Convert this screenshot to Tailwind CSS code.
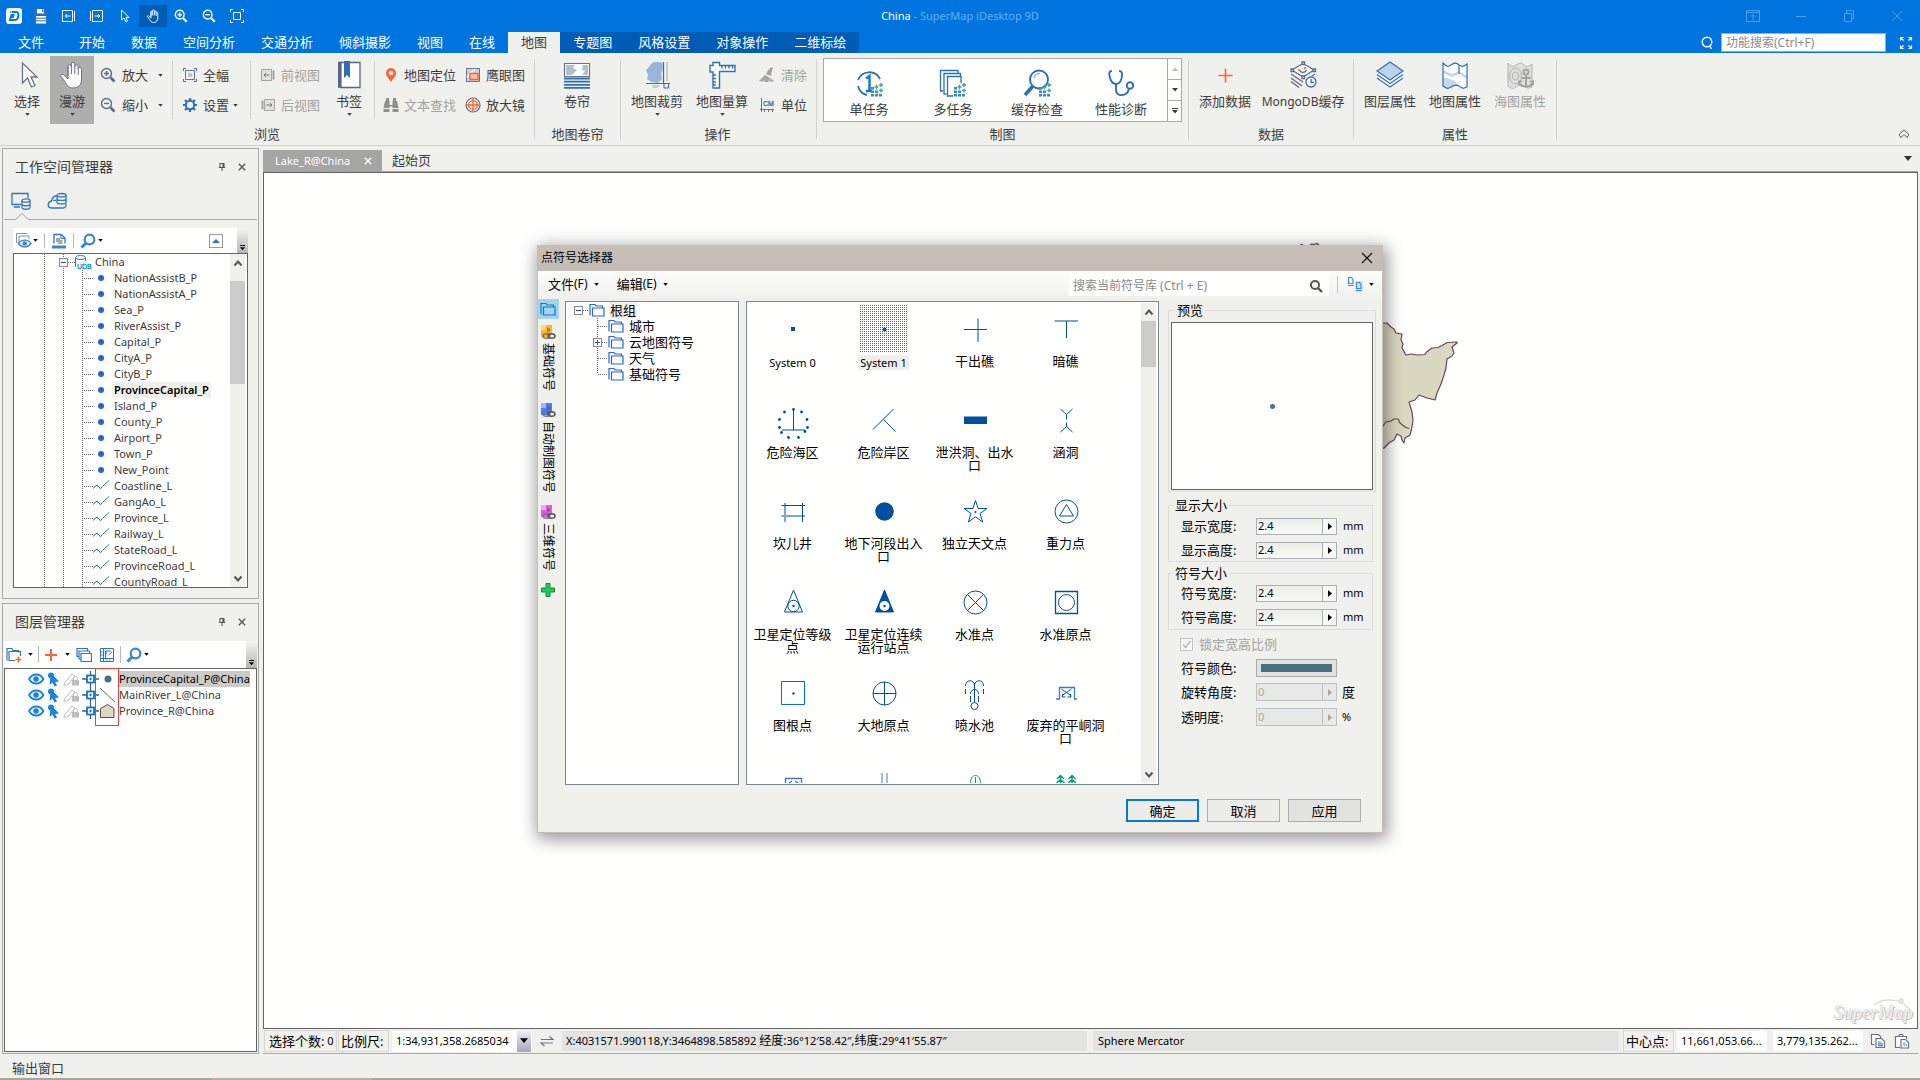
<!DOCTYPE html>
<html lang="zh-CN">
<head>
<meta charset="utf-8">
<title>China - SuperMap iDesktop 9D</title>
<script src="https://cdn.jsdelivr.net/npm/@tailwindcss/browser@4"></script>
</head>
<body class="relative flex h-screen flex-col overflow-hidden bg-[#f0f0ec] font-['Noto_Sans','Noto_Sans_CJK_SC',sans-serif] text-[13px] leading-5 text-[#3c3c3c]">

<svg class="hidden">
  <defs>
    <symbol id="hand" viewBox="0 0 24 28"><path d="M8 15V5.500a1.700 1.700 0 0 1 3.400 0V3a1.700 1.700 0 0 1 3.400 0v2.500a1.700 1.700 0 0 1 3.400 0V8a1.600 1.600 0 0 1 3.300 0v10c0 6-3 9-8.500 9-4 0-5.500-2-7.500-5.500L1 15.500c-.8-1.800 1.500-3 3-1.200L8 18V5.500M11.400 5v8M14.800 5v8M18.200 7v7" /></symbol>
    <symbol id="zoomin" viewBox="0 0 16 16"><circle cx="6.500" cy="6.500" r="5"/><path d="M4 6.500h5M6.500 4v5"/><path d="m10.500 10.500 4 4" stroke-width="2.600"/></symbol>
    <symbol id="zoomout" viewBox="0 0 16 16"><circle cx="6.500" cy="6.500" r="5"/><path d="M4 6.500h5"/><path d="m10.500 10.500 4 4" stroke-width="2.600"/></symbol>
    <symbol id="folder" viewBox="0 0 16 14"><path d="M1 12.500V1.500h5l1 1.500h6.500v2M3.500 5h11.500v8H3.500z" fill="none" stroke="currentColor" stroke-width="1.200"/></symbol>
    <symbol id="pin" viewBox="0 0 10 12"><path d="M2.500 1v5M7.500 1v5M2.500 1.500h5M1 6.500h8M5 7v4M6.200 1v5" stroke="#555" fill="none" stroke-width="1.300"/></symbol>
    <symbol id="close" viewBox="0 0 10 10"><path d="m1 1 8 8M9 1 1 9" stroke="currentColor" fill="none" stroke-width="1.700"/></symbol>
    <symbol id="lens" viewBox="0 0 16 16"><circle cx="9.500" cy="6.500" r="4.800" fill="none" stroke="#3a86cc" stroke-width="2.200"/><path d="m6 10-4.500 4.500" stroke="#3a86cc" stroke-width="3"/></symbol>
    <symbol id="tri" viewBox="0 0 6 4"><path d="M0 0h6L3 3.500z" fill="currentColor"/></symbol>
    <symbol id="up" viewBox="0 0 10 8"><path d="m1.500 6.500 3.500-4 3.500 4" fill="none" stroke="#555" stroke-width="2"/></symbol>
    <symbol id="down" viewBox="0 0 10 8"><path d="m1.500 1.500 3.500 4 3.500-4" fill="none" stroke="#555" stroke-width="2"/></symbol>
    <symbol id="grid" viewBox="0 0 12 14"><g fill="#3a86cc"><path d="M0 4h3v2.500H0zM0 7.500h3V10H0zM0 11h3v2.500H0zM4 7.500h3V10H4zM4 11h3v2.500H4zM8 11h3v2.500H8z"/></g><path d="M5.500 1.500v5M3.500 4h4M10 0v4M8 2h4M10 5.500v4M8 7.500h4" stroke="#45a590" stroke-width="1.400"/></symbol>
  </defs>
</svg>

<!-- Title bar and ribbon tabs -->
<header class="shrink-0 bg-[#0074de] text-white">
  <div class="flex h-8 items-center">
    <div class="flex w-[480px] items-center" role="toolbar">
      <span class="flex w-7 justify-center"><svg class="h-4 w-4" viewBox="0 0 16 16"><rect width="16" height="16" rx="3" fill="#f4f9ff"/><path d="M6 4h4.500c3 0 2.500 8-1.500 8H4l1.500-5h2L6.500 10" fill="none" stroke="#0a78dc" stroke-width="2"/><path d="M4 4h1.500" stroke="#2fb4a0" stroke-width="2"/></svg></span>
      <button aria-label="保存" class="flex h-[22px] w-[26px] items-center justify-center"><svg class="h-4 w-4" viewBox="0 0 16 16"><path d="M1.500 1h11l2 2v13h-13z" fill="#2f6db5"/><path d="M4 1h7v4.500H4zM3 8h10v7.500H3z" fill="#fff"/><path d="M9 1.500h1.500v2.500H9z" fill="#2f6db5"/><path d="M3 10.200h10M3 12.800h10" stroke="#2f6db5"/></svg></button>
      <button aria-label="前视图" class="flex h-[22px] w-7 items-center justify-center"><svg class="h-4 w-4" viewBox="0 0 16 16" fill="none" stroke="#fff"><path d="M2.500 2.500h10v11h-10zM14.500 3v10M10.500 8H5M7 6 5 8l2 2"/></svg></button>
      <button aria-label="后视图" class="flex h-[22px] w-7 items-center justify-center"><svg class="h-4 w-4" viewBox="0 0 16 16" fill="none" stroke="#fff"><path d="M4.500 2.500h10v11h-10zM2.500 3v10M6.500 8H12M10 6l2 2-2 2"/></svg></button>
      <button aria-label="选择" class="flex h-[22px] w-[29px] items-center justify-center"><svg class="h-4 w-4" viewBox="0 0 16 16" fill="none" stroke="#fff"><path d="M4.500 2v10l2.500-2 2 4 1.500-1-1.500-3.500h3z"/></svg></button>
      <button aria-label="漫游" class="flex h-[22px] w-7 items-center justify-center bg-[#005cb4]"><svg class="h-3.5 w-3.5" fill="none" stroke="#fff" stroke-width="1.800"><use href="#hand"/></svg></button>
      <button aria-label="放大" class="flex h-[22px] w-7 items-center justify-center"><svg class="h-[14px] w-[14px]" fill="none" stroke="#fff" stroke-width="1.600"><use href="#zoomin"/></svg></button>
      <button aria-label="缩小" class="flex h-[22px] w-7 items-center justify-center"><svg class="h-[14px] w-[14px]" fill="none" stroke="#fff" stroke-width="1.600"><use href="#zoomout"/></svg></button>
      <button aria-label="全幅" class="flex h-[22px] w-7 items-center justify-center"><svg class="h-3.5 w-3.5" viewBox="0 0 14 14" fill="none" stroke="#fff"><path d="M3.500 3.500h7v7h-7zM.5 3V.5H3M11 .5h2.500V3M13.500 11v2.500H11M3 13.500H.5V11"/></svg></button>
    </div>
    <h1 class="flex-1 text-center text-[11px] text-[#66aef0]"><span class="text-white">China</span> - SuperMap iDesktop 9D</h1>
    <div class="flex w-[480px] items-center justify-end gap-[34px] pr-4 text-[#4da3ee]">
      <button aria-label="功能区选项"><svg class="block h-3.5 w-3.5" viewBox="0 0 14 14" fill="none" stroke="currentColor"><path d="M.5 1.500h13v11H.5zM.5 3.500h13M7 11V5.500M5 7.500l2-2 2 2"/></svg></button>
      <button aria-label="最小化"><svg class="block h-3.5 w-3.5" viewBox="0 0 14 14" stroke="currentColor"><path d="M2 7.500h10"/></svg></button>
      <button aria-label="还原"><svg class="block h-3.5 w-3.5" viewBox="0 0 14 14" fill="none" stroke="currentColor"><path d="M2.500 4.500h7v8h-7zM4.500 4V1.500h7v8H10"/></svg></button>
      <button aria-label="关闭"><svg class="block h-3.5 w-3.5" viewBox="0 0 14 14" stroke="currentColor"><path d="m2 2 10 10M12 2 2 12"/></svg></button>
    </div>
  </div>
  <nav class="flex h-[21px] items-stretch leading-5 [&>button]:pb-0.5">
    <button class="mr-1 w-[62px]">文件</button>
    <button class="px-[13px]">开始</button>
    <button class="px-[13px]">数据</button>
    <button class="px-[13px]">空间分析</button>
    <button class="px-[13px]">交通分析</button>
    <button class="px-[13px]">倾斜摄影</button>
    <button class="px-[13px]">视图</button>
    <button class="px-[13px]">在线</button>
    <button class="bg-[#f0f0ec] px-[13px] text-[#3c3c3c]">地图</button>
    <button class="bg-[#005cb4] px-[13px]">专题图</button>
    <button class="bg-[#005cb4] px-[13px]">风格设置</button>
    <button class="bg-[#005cb4] px-[13px]">对象操作</button>
    <button class="bg-[#005cb4] px-[13px]">二维标绘</button>
    <div class="ml-auto flex items-center pr-[7px]">
      <svg class="mr-2 h-3.5 w-3" viewBox="0 0 12 14" fill="none" stroke="#fff" stroke-width="1.400"><circle cx="6" cy="6" r="4.800"/><path d="m8.500 9.500 2 3.500"/></svg>
      <input type="text" aria-label="功能搜索" placeholder="功能搜索(Ctrl+F)" class="h-[19px] w-[165px] border border-[#a9a9a9] bg-[#fffffd] px-1 text-[12px] placeholder:text-[#8c8c8c]">
      <button aria-label="全屏" class="ml-[13px]"><svg class="block h-3.5 w-3.5" viewBox="0 0 14 14" fill="none" stroke="#fff" stroke-width="1.200"><path d="M1.500 4.500v-3h3M1.500 1.500l3 3M9.500 1.500h3v3M12.500 1.500l-3 3M1.500 9.500v3h3M1.500 12.500l3-3M12.500 9.500v3h-3M12.500 12.500l-3-3"/></svg></button>
    </div>
  </nav>
</header>

<!-- Ribbon -->
<section class="flex h-[93px] shrink-0 items-start border-b border-[#cfcfcd] pt-[3px]">
  <div class="flex flex-col">
    <div class="flex h-[68px] items-start pr-[9px] pl-[5px]">
      <button class="flex h-[68px] w-11 flex-col items-center pt-[5px]"><svg class="h-7 w-6" viewBox="0 0 24 28"><path d="M7.500 2v20l5-5 4 9 3.500-1.500-4-8.500h6z" fill="#fff" stroke="#6b7285" stroke-width="1.300"/></svg><span class="mt-0.5">选择</span><svg class="mt-0.5 h-[3px] w-[5px]"><use href="#tri"/></svg></button>
      <button class="ml-px flex h-[68px] w-11 flex-col items-center bg-[#aeaeac] pt-[5px]"><svg class="h-7 w-6" fill="#fff" stroke="#6b7285"><use href="#hand"/></svg><span class="mt-0.5">漫游</span><svg class="mt-0.5 h-[3px] w-[5px]"><use href="#tri"/></svg></button>
      <div class="ml-1.5 w-[66px] pt-1">
        <button class="flex h-[30px] items-center"><svg class="mr-1.5 h-4 w-4" fill="none" stroke="#5f6b85" stroke-width="1.400"><use href="#zoomin"/></svg>放大<svg class="ml-2.5 h-[3px] w-[5px]"><use href="#tri"/></svg></button>
        <button class="flex h-[30px] items-center"><svg class="mr-1.5 h-4 w-4" fill="none" stroke="#5f6b85" stroke-width="1.400"><use href="#zoomout"/></svg>缩小<svg class="ml-2.5 h-[3px] w-[5px]"><use href="#tri"/></svg></button>
      </div>
      <span class="mt-[5px] ml-1.5 h-[58px] w-px bg-[#cfcfcd]"></span>
      <div class="ml-[9px] w-[59px] pt-1">
        <button class="flex h-[30px] items-center"><svg class="mr-[5px] h-4 w-4" viewBox="0 0 16 16" fill="none"><path d="M3.500 3.500h9v9h-9z" stroke="#6b7285"/><path d="M6 6h4v4H6z" fill="#b9c4d6"/><path d="M1.500 4V1.500H4M12 1.500h2.500V4M14.500 12v2.500H12M4 14.500H1.500V12" stroke="#2f6fb8"/></svg>全幅</button>
        <button class="flex h-[30px] items-center"><svg class="mr-[5px] h-4 w-4" viewBox="0 0 16 16" fill="none" stroke="#2f6fb8"><circle cx="8" cy="8" r="4.200" stroke-width="2"/><path d="M8 1v2.500M8 12.500V15M1 8h2.500M12.500 8H15M3 3l1.800 1.800M11.200 11.200 13 13M13 3l-1.800 1.800M4.800 11.200 3 13" stroke-width="2.200"/></svg>设置<svg class="ml-1 h-[3px] w-[5px]"><use href="#tri"/></svg></button>
      </div>
      <span class="mt-[5px] ml-[9px] h-[58px] w-px bg-[#cfcfcd]"></span>
      <div class="ml-[9px] pt-1 text-[#a3a3a1]">
        <button disabled class="flex h-[30px] items-center"><svg class="mr-[5px] h-4 w-4" viewBox="0 0 16 16" fill="none" stroke="#a3a3a1"><path d="M1.500 2.500h10v11h-10z" fill="#e0e0de"/><path d="M13.500 3.500v9" stroke-width="2"/><path d="M9.500 8H4M6 6 4 8l2 2" stroke="#777"/></svg>前视图</button>
        <button disabled class="flex h-[30px] items-center"><svg class="mr-[5px] h-4 w-4" viewBox="0 0 16 16" fill="none" stroke="#a3a3a1"><path d="M4.500 2.500h10v11h-10z" fill="#e0e0de"/><path d="M2.500 3.500v9" stroke-width="2"/><path d="M6.500 8H12M10 6l2 2-2 2" stroke="#777"/></svg>后视图</button>
      </div>
      <button class="ml-[7px] flex h-[68px] w-11 flex-col items-center pt-[5px]"><svg class="h-7 w-6" viewBox="0 0 24 28"><path d="M3.500 1.500h19.500v25h-19.500z" fill="#fff" stroke="#5b6780" stroke-width="1.300"/><path d="M1 .8h3.500v26H1z" fill="#5b6780"/><path d="M7 0h6v17l-3-3-3 3z" fill="#2f6fb8"/></svg><span class="mt-0.5">书签</span><svg class="mt-0.5 h-[3px] w-[5px]"><use href="#tri"/></svg></button>
      <span class="mt-[5px] ml-[3px] h-[58px] w-px bg-[#cfcfcd]"></span>
      <div class="ml-2 pt-1">
        <button class="flex h-[30px] items-center"><svg class="mr-[5px] h-4 w-4" viewBox="0 0 16 16"><path fill-rule="evenodd" d="M8 1a5 5 0 0 1 5 5c0 3.500-3 5.500-5 9-2-3.500-5-5.500-5-9a5 5 0 0 1 5-5m0 2.800a2.200 2.200 0 1 0 0 4.400 2.200 2.200 0 0 0 0-4.400" fill="#ff6330"/></svg>地图定位</button>
        <button disabled class="flex h-[30px] items-center text-[#a3a3a1]"><svg class="mr-[5px] h-4 w-4" viewBox="0 0 16 16" fill="#8f8f8d"><path d="M3 1h3v3H3zM10 1h3v3h-3zM2 4h4.500v4H9.500V4H14l1.500 7H9.500v-1.500h-3V11H.5zM.5 12h6v3h-6zM9.500 12h6v3h-6z"/></svg>文本查找</button>
      </div>
      <div class="ml-[9px] pt-1">
        <button class="flex h-[30px] items-center"><svg class="mr-[5px] h-4 w-4" viewBox="0 0 16 16"><path d="M1.500 1.500h13v13h-13z" fill="#c3d3e6" stroke="#6b7285"/><path d="M2 10 10 2" stroke="#f5f5f5" stroke-width="2"/><path d="M5 6.500h8v6H5z" fill="#ffc4ad" stroke="#ff6330" stroke-width="1.400"/></svg>鹰眼图</button>
        <button class="flex h-[30px] items-center"><svg class="mr-[5px] h-4 w-4" viewBox="0 0 16 16" fill="none"><circle cx="8" cy="8" r="7" stroke="#5f6b85" stroke-width="1.200"/><circle cx="8" cy="8" r="4.300" stroke="#ff6330" stroke-width="1.300"/><path d="M8 1.500v13M1.500 8h13" stroke="#ff6330" stroke-width="1.300"/></svg>放大镜</button>
      </div>
    </div>
    <span class="text-center">浏览</span>
  </div>
  <span class="mt-[3px] h-20 w-px bg-[#d2d2d0]"></span>

  <div class="flex flex-col">
    <div class="h-[68px] pr-[17px] pl-4">
      <button class="flex h-[68px] w-[52px] flex-col items-center pt-[5px]"><svg class="h-7 w-7" viewBox="0 0 28 28"><path d="M1.500 2.500h25v13h-25z" fill="#fff" stroke="#6b7285" stroke-width="1.200"/><path d="M3 4h9l-2 3 4 2-5 5H3zM20 4h5v10h-6l3-4-3-1z" fill="#b4bdcd"/><path d="M1 17.500h26M1 20.700h26M1 23.800h26M1 26.800h26" stroke="#2f6fb8" stroke-width="1.800"/></svg><span class="mt-0.5">卷帘</span></button>
    </div>
    <span class="text-center">地图卷帘</span>
  </div>
  <span class="mt-[3px] h-20 w-px bg-[#d2d2d0]"></span>

  <div class="flex flex-col">
    <div class="flex h-[68px] pr-[9px] pl-1.5">
      <button class="flex h-[68px] w-[60px] flex-col items-center pt-[5px]"><svg class="h-7 w-7" viewBox="0 0 28 28"><path d="M8 3l3-2h6l2 1 1 5-2 6 1 5-4 4-7-1-4-3 1-4-2-5 3-3z" fill="#98b6dc"/><path d="M23 1h2v19h-2zM9 24h8l-2 3h-5z" fill="#c9cbd3"/><path d="M20.500 1v22M3 22.500h24" stroke="#2f6fb8" stroke-width="1.200"/><path d="M21 22v5h4.500v-5" fill="none" stroke="#2f6fb8"/></svg><span class="mt-0.5">地图裁剪</span><svg class="mt-0.5 h-[3px] w-[5px]"><use href="#tri"/></svg></button>
      <button class="ml-[5px] flex h-[68px] w-[60px] flex-col items-center pt-[5px]"><svg class="h-7 w-7" viewBox="0 0 28 28" fill="none" stroke="#2f6fb8" stroke-width="1.400"><path d="M5 1.500h6.500v3H27v6H11.500v16.500H5V11H2V4.500h3z" fill="#fdfefe"/><path d="M14 5v2.500M17.500 5v2.500M21 5v2.500M24.500 5v2.500M5 14h3M5 17.500h3M5 21h3M5 24h3"/></svg><span class="mt-0.5">地图量算</span><svg class="mt-0.5 h-[3px] w-[5px]"><use href="#tri"/></svg></button>
      <div class="ml-[7px] pt-1">
        <button disabled class="flex h-[30px] items-center text-[#a3a3a1]"><svg class="mr-1.5 h-4 w-4" viewBox="0 0 16 16" fill="#a3a3a1"><path d="M11 1l3-1-2 7 1 2-4-1-2-1 1-2zM6 8l5 3-2 4H5l1-3-2 2.500L0 14zM11.500 11 15 14.500h-5z"/></svg>清除</button>
        <button class="flex h-[30px] items-center"><svg class="mr-1.5 h-4 w-4" viewBox="0 0 16 16"><path d="M2.500 1v14M1 12.500h14M5.500 12v3M9.500 12v3M13.500 12v3" stroke="#6b7285" fill="none"/><text x="4" y="9" font-size="7" fill="#2f6fb8" stroke="#2f6fb8" stroke-width=".3" font-family="Liberation Sans">CM</text></svg>单位</button>
      </div>
    </div>
    <span class="pr-0.5 text-center">操作</span>
  </div>
  <span class="mt-[3px] h-20 w-px bg-[#d2d2d0]"></span>

  <div class="flex flex-col">
    <div class="h-[68px] px-1.5 pt-0.5">
      <div class="flex h-16 w-[359px] border border-[#a9a9a9] bg-[#fffffd] pl-[3px]">
        <button class="flex w-[84px] flex-col items-center pt-[10px]"><svg class="h-7 w-7" viewBox="0 0 28 28"><path d="M3 11a12 12 0 0 1 22-1M3 17a12 12 0 0 0 9 9" fill="none" stroke="#2f6fb8" stroke-width="1.800"/><path d="M11 9.500 14.500 7v15M11 22h6" fill="none" stroke="#1673c8" stroke-width="2.400"/><svg x="16" y="14" width="12" height="14"><use href="#grid"/></svg></svg><span class="mt-0.5">单任务</span></button>
        <button class="flex w-[84px] flex-col items-center pt-[10px]"><svg class="h-7 w-7" viewBox="0 0 28 28" fill="none" stroke="#2f6fb8" stroke-width="1.300"><path d="M4 22H1.500V1.500H19V4M7.500 25H5V4.500h16.500V7M22 14V7.500H8.500V27H14"/><svg x="15" y="14" width="12" height="14" stroke="none"><use href="#grid"/></svg></svg><span class="mt-0.5">多任务</span></button>
        <button class="flex w-[84px] flex-col items-center pt-[10px]"><svg class="h-7 w-7" viewBox="0 0 28 28"><circle cx="16" cy="10.500" r="9" fill="#fff" stroke="#2f6fb8" stroke-width="1.900"/><path d="M11 9a5.500 5.500 0 0 1 6-4.500" fill="none" stroke="#8fb6dd" stroke-width="1.500"/><path d="m10 17-8 9" stroke="#2f6fb8" stroke-width="3.600"/><svg x="16" y="14" width="12" height="14"><use href="#grid"/></svg></svg><span class="mt-0.5">缓存检查</span></button>
        <button class="flex w-[84px] flex-col items-center pt-[10px]"><svg class="h-7 w-7" viewBox="0 0 28 28" fill="none" stroke="#2f6fb8" stroke-width="1.900"><path d="M5 2C2 2 2 4 2.500 7c.8 4 2.500 8 6.500 8s5.500-4 6-8c.3-3 0-5-3-5M9 15v6c0 7 11 7 13-1"/><circle cx="23" cy="16.500" r="3.200"/></svg><span class="mt-0.5">性能诊断</span></button>
        <div class="ml-auto flex w-3.5 flex-col divide-y divide-[#a9a9a9] border-l border-[#a9a9a9]">
          <button aria-label="向上" class="flex flex-1 items-center justify-center text-[#b8b8b8]"><svg class="h-1 w-1.5 rotate-180"><use href="#tri"/></svg></button>
          <button aria-label="向下" class="flex flex-1 items-center justify-center"><svg class="h-1 w-1.5"><use href="#tri"/></svg></button>
          <button aria-label="更多" class="flex flex-1 flex-col items-center justify-center gap-px"><span class="h-px w-1.5 bg-[#444]"></span><svg class="h-1 w-1.5"><use href="#tri"/></svg></button>
        </div>
      </div>
    </div>
    <span class="text-center">制图</span>
  </div>
  <span class="mt-[3px] h-20 w-px bg-[#d2d2d0]"></span>

  <div class="flex flex-col">
    <div class="flex h-[68px] gap-1 px-1.5">
      <button class="flex w-[60px] flex-col items-center pt-[5px]"><svg class="h-7 w-7" viewBox="0 0 28 28"><path d="M14.500 7.500v14M7.500 14.500h14" stroke="#ff6330" stroke-width="1.600"/></svg><span class="mt-0.5">添加数据</span></button>
      <button class="flex w-[88px] flex-col items-center pt-[5px]"><svg class="h-7 w-7" viewBox="0 0 28 28" fill="none" stroke="#5f6b85" stroke-width="1.300"><path d="m14 2.500 11 6.500-11 7L3 9z" fill="#fff"/><path d="M13 1h2.500v2.500H13zM24 8h2.500v2.500H24zM2 8h2.500v2.500H2zM13 15h2.500v2.500H13z" fill="#fff"/><path d="m2 13 12 8M2 17l11 8M2 20.500l8 6M26 13l-3 2"/><path d="M11 9.500c1 3 7 2 6-1" stroke="#2f6fb8"/><circle cx="10" cy="9" r="1.300" fill="#ff8a30" stroke="none"/><circle cx="16" cy="7" r="1.300" fill="#ff8a30" stroke="none"/><circle cx="22" cy="21" r="5" stroke="#2f6fb8" fill="#fff"/><path d="M22 18v3.500h3" stroke="#2f6fb8"/></svg><span class="mt-0.5"><span class="text-[12px]">MongoDB</span>缓存</span></button>
    </div>
    <span class="text-center">数据</span>
  </div>
  <span class="mt-[3px] h-20 w-px bg-[#d2d2d0]"></span>

  <div class="flex flex-col">
    <div class="flex h-[68px] gap-[5px] px-1.5">
      <button class="flex w-[60px] flex-col items-center pt-[5px]"><svg class="h-7 w-7" viewBox="0 0 28 28" stroke="#2f6fb8" stroke-width="1.200"><path d="m1 17 13 9 13-9" fill="#fff"/><path d="m1 13.500 13 9 13-9" fill="#fff"/><path d="m14 1 13 9-13 9L1 10z" fill="#bdd2e6"/></svg><span class="mt-0.5">图层属性</span></button>
      <button class="flex w-[60px] flex-col items-center pt-[5px]"><svg class="h-7 w-7" viewBox="0 0 28 28"><path d="M2 2c4 4 5 4 8 2s5-3 8 0c3 2 4 2 8-1v23c-4 2-5 1-8-1s-5-1-8 1-4 2-8-1z" fill="#fff"/><path d="M2 17c5-1 7 2 12 3l4 6c-3-3-5-2-8 0s-4 2-8-1zM2 9l9 4 7-3 8 5v3l-8-5-7 3-9-4z" fill="#c3d6ea"/><path d="M2 2c4 4 5 4 8 2s5-3 8 0c3 2 4 2 8-1v23c-4 2-5 1-8-1s-5-1-8 1-4 2-8-1zM18 4v9" fill="none" stroke="#2f6fb8" stroke-width="1.200"/></svg><span class="mt-0.5">地图属性</span></button>
      <button disabled class="flex w-[60px] flex-col items-center pt-[5px] text-[#a3a3a1]"><svg class="h-7 w-7" viewBox="0 0 28 28" fill="none" stroke="#b3b3b1"><path d="M2 2c4 4 5 4 8 2s5-3 8 0c3 2 4 2 8-1v23c-4 2-5 1-8-1s-5-1-8 1-4 2-8-1z" fill="#dededc"/><ellipse cx="9.500" cy="15" rx="3" ry="4"/><ellipse cx="9.500" cy="15" rx="6" ry="8"/><g stroke="#a3a3a1" stroke-width="2"><circle cx="20" cy="11" r="2.500"/><path d="M20 13.500V26M15.500 17h9M13 21c1 6 13 6 14 0M13 24v-3.500h3M27 24v-3.500h-3"/></g></svg><span class="mt-0.5">海图属性</span></button>
    </div>
    <span class="text-center">属性</span>
  </div>
  <span class="mt-[3px] h-20 w-px bg-[#d2d2d0]"></span>
  <button aria-label="折叠功能区" class="mt-[72px] mr-2.5 ml-auto"><svg class="block h-3 w-3" viewBox="0 0 12 12" fill="none" stroke="#555"><path d="m1.500 6 4.500-4 4.500 4M3 9.500l3-3 3 3M1.500 6v1.500L3 9.500M10.500 6v1.500L9 9.500"/></svg></button>
</section>

<div class="flex min-h-0 flex-1">
  <!-- Docked panels -->
  <aside class="flex w-[259px] shrink-0 flex-col gap-1 pt-0.5 pl-0.5">
    <section class="flex h-[451px] shrink-0 flex-col border border-[#a9a9a7] px-px">
      <div class="flex h-9 items-center pr-[11px] pb-px pl-[11px]"><h2 class="flex-1 text-[14px]">工作空间管理器</h2><button aria-label="固定"><svg class="block h-2.5 w-2"><use href="#pin"/></svg></button><button aria-label="关闭" class="ml-3 text-[#555]"><svg class="block h-2 w-2"><use href="#close"/></svg></button></div>
      <div class="relative flex h-[35px] items-start gap-4 border-b border-[#a9a9a7] pt-[7px] pl-[7px]">
        <button aria-label="本地"><svg class="block h-[18px] w-5" viewBox="0 0 20 18" fill="none" stroke="#2f76bd" stroke-width="1.300"><path d="M10 12.500H1V1.500h16V6M3 15h6"/><ellipse cx="15" cy="8.500" rx="4" ry="1.700" fill="#f0f0ec"/><path d="M11 8.500v7c0 2.300 8 2.300 8 0v-7M11 12c0 2.300 8 2.300 8 0"/></svg></button>
        <button aria-label="在线"><svg class="block h-[18px] w-5" viewBox="0 0 20 18" fill="none" stroke="#2f76bd" stroke-width="1.300"><path d="M19 12c.5 3-1.500 4-3 4H5c-5 0-5-6-.5-7C5 5.500 7 4 9.500 4M6 8.500c1-.5 2-.3 3 .3"/><ellipse cx="14.500" cy="3.200" rx="4.500" ry="1.700"/><path d="M10 3.200v7c0 2.300 9 2.300 9 0v-7M10 6.700c0 2.300 9 2.300 9 0"/></svg></button>
        <svg class="absolute -bottom-px left-[11px] h-[7px] w-3.5" viewBox="0 0 14 7"><path d="M1 6.500h12" stroke="#f0f0ec" stroke-width="1.500"/><path d="M.5 6.500 7 .5l6.500 6" fill="none" stroke="#a9a9a7"/></svg>
      </div>
      <div class="mx-[9px] mt-2 mb-[10px] flex min-h-0 flex-1 flex-col">
        <div class="flex h-[25px] shrink-0 items-center bg-[#fffffd] text-black">
          <button aria-label="显示" class="flex items-center pl-[3px]"><svg class="h-4 w-4" viewBox="0 0 16 16" fill="none" stroke="#8a8f98"><path d="M.5 10V.5H11M3 12V3h10v3"/><path d="M2.500 10.500c3-4.500 9.500-4.500 12.500 0-3 4.500-9.500 4.500-12.500 0z" fill="#fff" stroke="#3a86cc" stroke-width="1.400"/><circle cx="8.700" cy="10.500" r="2.300" fill="#3a86cc" stroke="none"/></svg><svg class="ml-px h-[3px] w-[5px]"><use href="#tri"/></svg></button>
          <span class="mx-[6px] h-[15px] w-px bg-[#b9b9b9]"></span>
          <button aria-label="保存"><svg class="block h-4 w-4" viewBox="0 0 16 16" fill="none"><path d="M3 10.500V1.500h7l4 3.500v5.500" stroke="#2f76bd" stroke-width="1.300"/><path d="M10 2v3.500h4" stroke="#2f76bd"/><path d="M5 5h4v2h2.500v4H7V9H5z" fill="#a9a9a9"/><path d="M1 12.500h14v3H1z" fill="#3a86cc"/></svg></button>
          <span class="mx-[6px] h-[15px] w-px bg-[#b9b9b9]"></span>
          <button aria-label="查找" class="flex items-center"><svg class="h-4 w-4"><use href="#lens"/></svg><svg class="ml-0.5 h-[3px] w-[5px]"><use href="#tri"/></svg></button>
          <button aria-label="收起" class="mr-[14px] ml-auto flex h-[14px] w-[14px] items-center justify-center border border-[#9a9a9a] text-[#2f76bd]"><svg class="h-[5px] w-2 rotate-180" viewBox="0 0 8 5"><path d="M0 0h8L4 4z" fill="currentColor"/></svg></button>
          <button aria-label="更多" class="flex h-full w-[11px] flex-col items-center justify-end gap-px bg-linear-to-b from-[#f4f4f2] to-[#b4b4b4] pb-0.5"><span class="h-px w-[5px] bg-black"></span><svg class="h-1 w-[5px]"><use href="#tri"/></svg></button>
        </div>
        <div class="flex min-h-0 flex-1 overflow-hidden border border-[#646464] bg-[#fffffd]">
          <ul id="workspace" class="min-w-0 flex-1 overflow-hidden text-[11px] leading-4"></ul>
          <div class="mr-0.5 flex w-[15px] flex-col items-center bg-[#f0f0ec]"><svg class="my-[5px] h-2 w-2.5"><use href="#up"/></svg><span class="mt-[9px] h-[103px] w-full bg-[#cbcbc9]"></span><svg class="mt-auto mb-1 h-2 w-2.5"><use href="#down"/></svg></div>
        </div>
      </div>
    </section>

    <section class="flex min-h-0 flex-1 flex-col border border-[#a9a9a7] px-px pb-px">
      <div class="flex h-[37px] shrink-0 items-center pr-[11px] pb-0.5 pl-[11px]"><h2 class="flex-1 text-[14px]">图层管理器</h2><button aria-label="固定"><svg class="block h-2.5 w-2"><use href="#pin"/></svg></button><button aria-label="关闭" class="ml-3 text-[#555]"><svg class="block h-2 w-2"><use href="#close"/></svg></button></div>
      <div class="flex h-[27px] shrink-0 items-center bg-[#fffffd] text-black">
        <button aria-label="新建组" class="flex items-center pl-0.5"><svg class="h-4 w-4" viewBox="0 0 16 16" fill="none" stroke="#2f76bd" stroke-width="1.200"><path d="M1 13.500V1.500h5l1 2h5.500v2M9 13.500H3v-9h11.500V9"/><path d="M12.500 9.500v6M9.500 12.500h6" stroke="#ff6330" stroke-width="1.600"/></svg><svg class="ml-1.5 h-[3px] w-[5px]"><use href="#tri"/></svg></button>
        <span class="mx-[5px] h-[17px] w-px bg-[#b9b9b9]"></span>
        <button aria-label="添加" class="flex items-center"><svg class="h-3.5 w-3.5" viewBox="0 0 14 14"><path d="M7 1v12M1 7h12" stroke="#ff6330" stroke-width="2"/></svg><svg class="ml-[7px] h-[3px] w-[5px]"><use href="#tri"/></svg></button>
        <button aria-label="图层组" class="ml-1.5"><svg class="block h-4 w-4" viewBox="0 0 16 16" fill="#fff" stroke="#2f76bd" stroke-width="1.200"><path d="M1 1.500h10.500v8H1z"/><path d="M3 4h10.500v8H3z"/><path d="M5 6.500h10.500v8H5z"/></svg></button>
        <button aria-label="属性" class="ml-[7px]"><svg class="block h-4 w-4" viewBox="0 0 16 16" fill="none" stroke="#2f76bd"><path d="M1.500 1.500h13v13h-13zM4.500 2v12M2 11.500h12M7 8V4h5M6.500 4v7" /><path d="M2 5h2M2 8h2M8 12v2M11 12v2M9.500 8.500 13 5" stroke="#7d8aa3"/></svg></button>
        <span class="mx-[5px] h-[17px] w-px bg-[#b9b9b9]"></span>
        <button aria-label="查找" class="flex items-center"><svg class="h-4 w-4"><use href="#lens"/></svg><svg class="ml-0.5 h-[3px] w-[5px]"><use href="#tri"/></svg></button>
        <button aria-label="更多" class="ml-auto flex h-full w-[11px] flex-col items-center justify-end gap-px bg-linear-to-b from-[#f4f4f2] to-[#b4b4b4] pb-0.5"><span class="h-px w-[5px] bg-black"></span><svg class="h-1 w-[5px]"><use href="#tri"/></svg></button>
      </div>
      <div class="relative min-h-0 flex-1 border border-[#646464] bg-[#fffffd] pt-0.5">
        <ul id="layers" class="text-[11px] leading-4"></ul>
        <span class="absolute -top-px left-[90px] h-[58px] w-6 border border-[#ee3b3b]"></span>
      </div>
    </section>
  </aside>

  <!-- Documents -->
  <main class="flex min-w-0 flex-1 flex-col pr-0.5 pl-1">
    <div class="flex h-[26px] shrink-0 items-end border-b border-[#a5a5a3] pr-1.5">
      <button class="flex h-[21px] w-[119px] items-center justify-between bg-[#a5a5a3] pr-2.5 pl-3 text-[11px] text-white">Lake_R@China<svg class="h-2 w-2"><use href="#close"/></svg></button>
      <button class="h-[21px] pb-0.5 pl-2.5 leading-5">起始页</button>
      <button aria-label="文档列表" class="mb-2.5 ml-auto text-[#333]"><svg class="block h-[5px] w-2" viewBox="0 0 8 5"><path d="M0 0h8L4 5z" fill="currentColor"/></svg></button>
    </div>
    <div class="relative min-h-0 flex-1 overflow-hidden border border-[#646462] bg-[#fffffd]">
      <svg class="absolute top-0 left-[1025px] h-[300px] w-[180px]" viewBox="1290 173 180 300" fill="#dbd8c1" stroke="#6b4458" stroke-width="1.200" stroke-linejoin="round">
        <path d="M1302 245.500v-1h2M1311 245l2-1 2 .5 3-1 2 1.500"/>
        <path d="M1370 323h18l4 4 3 2 2 4 6 1-1 6 2 4-1 4 4 7 5-1 6 1 8-.5 1.500-2.500 5.500-4 6-.5 4-2 5-3 10-.5v1l-5 4 1 3 1 3-2 3-5 3-1 9-2 7-3 9-4 9-2 7-8-2-8-3-4 5-6 2 3 10 1 8-1 7-2 8-5 3-1 5-2-3-1-4-4-2-3 6-5 3-5 5-13 4z"/>
        <path d="M1370 427h13l4-5 5-1 3-2h4l2 4 5 4 4 1.500" fill="none"/>
      </svg>
      <div class="absolute right-1 bottom-[3px] font-['Liberation_Serif',serif] text-[19px] leading-6 text-[#ededeb] italic [text-shadow:1px_1px_1px_#b5b5b3,-1px_-1px_0_#e2e2e0]">SuperMap<svg class="absolute top-[-4px] right-0 h-4 w-10" viewBox="0 0 40 16" fill="none" stroke="#dcdcda" stroke-width="1.500"><path d="M1 8C10 1 28 0 38 14"/><circle cx="28" cy="4" r="2" fill="#eee"/></svg></div>
    </div>
    <div class="flex h-[25px] shrink-0 items-center border-b border-[#a9a9a7] pl-px text-[11px] leading-5 text-black">
      <span class="flex h-[22px] w-[73px] items-center border border-[#d6d6d4] pl-1"><span class="text-[13px]">选择个数:</span>&nbsp;0</span>
      <label for="scale" class="ml-px flex h-[22px] w-[51px] items-center border border-[#d6d6d4] pl-0.5 text-[13px]">比例尺:</label>
      <span class="relative ml-[3px] flex h-[21px] w-[140px] bg-[#fffffd]">
        <select id="scale" class="h-full w-full appearance-none border-none bg-transparent pl-1"><option>1:34,931,358.2685034</option></select>
        <span class="pointer-events-none absolute inset-y-0 right-px flex w-[14px] items-center justify-center bg-linear-to-b from-[#eeeef6] to-[#a9a4c0]"><svg class="h-1.5 w-2"><use href="#tri"/></svg></span>
      </span>
      <button aria-label="切换" class="mx-2"><svg class="block h-3 w-3.5" viewBox="0 0 14 12" fill="none" stroke="#6b7285" stroke-width="1.200"><path d="M1 4.500h12l-3.500-3M13 8H1l3.500 3"/></svg></button>
      <span class="flex h-5 flex-1 items-center bg-[#e3e3e1] pl-1 whitespace-pre">X:4031571.990118,Y:3464898.585892 <span class="text-[12px]">经度:</span>36°12′58.42″,<span class="text-[12px]">纬度:</span>29°41′55.87″</span>
      <span class="ml-1.5 flex h-5 flex-1 items-center bg-[#e3e3e1] pl-[5px]">Sphere Mercator</span>
      <span class="ml-1 flex h-[22px] w-[51px] items-center border border-[#d6d6d4] pl-0.5 text-[13px]">中心点:</span>
      <input type="text" aria-label="中心点 X" value="11,661,053.66..." class="ml-[3px] h-5 w-[90px] bg-[#fffffd] pl-1">
      <input type="text" aria-label="中心点 Y" value="3,779,135.262..." class="ml-1.5 h-5 w-[90px] bg-[#fffffd] pl-1">
      <button aria-label="复制" class="ml-[7px]"><svg class="block h-4 w-4" viewBox="0 0 16 16" fill="#fff" stroke="#6b7285" stroke-width="1.200"><path d="M4.500 11.500h-3v-10h7l2 2v2"/><path d="M6 5.500h5.500l3 3v6H6z"/><path d="M8 9h3M8 10.800h5M8 12.700h5" stroke="#3a86cc"/></svg></button>
      <button aria-label="粘贴" class="mr-2 ml-2"><svg class="block h-4 w-4" viewBox="0 0 16 16" fill="#fff" stroke="#6b7285" stroke-width="1.200"><path d="M6 14.500H1.500v-11h11V6M4.500 3.500l1-2h3l1 2"/><path d="M7 6.500h4.500l3 3v5.500H7z"/><path d="M9 10h2M9 12h4" stroke="#3a86cc"/></svg></button>
    </div>
  </main>
</div>

<footer class="flex h-[26px] shrink-0 flex-col justify-between"><button class="mt-1 self-start pl-3">输出窗口</button><div class="flex h-0.5 shrink-0 bg-[#a9a39a] pl-[212px]"><span class="w-40 bg-[#bfaea8]"></span></div></footer>

<!-- Point symbol selector window -->
<div role="dialog" aria-labelledby="dlg-title" class="absolute top-[245px] left-[537px] flex w-[846px] flex-col border border-[#c5bdb6] bg-[#f0f0ec] text-black shadow-[2px_4px_16px_2px_rgba(0,0,0,0.42)]">
  <div class="flex h-[25px] items-center bg-[#c5bdb6] pr-[9px] pb-px pl-[3px]"><h2 id="dlg-title" class="flex-1 text-[12px]">点符号选择器</h2><button aria-label="关闭窗口"><svg class="block h-3 w-3" viewBox="0 0 12 12"><path d="m1 1 10 10M11 1 1 11" stroke="#111" stroke-width="1.200"/></svg></button></div>
  <div class="flex h-7 items-start bg-linear-to-b from-[#fdfdfb] to-[#f0f0ec] pt-px pl-2.5">
    <button class="flex h-6 items-center">文件<span class="text-[12px]">(F)</span><svg class="ml-1.5 h-[3px] w-[5px]"><use href="#tri"/></svg></button>
    <button class="ml-[18px] flex h-6 items-center">编辑<span class="text-[12px]">(E)</span><svg class="ml-1.5 h-[3px] w-[5px]"><use href="#tri"/></svg></button>
    <label class="ml-auto flex h-6 w-[260px] items-center bg-[#fffffd] pt-1 pr-1.5 pl-1">
      <input type="text" aria-label="搜索当前符号库" placeholder="搜索当前符号库 (Ctrl + E)" class="min-w-0 flex-1 text-[12px] placeholder:text-[#8a8a8a]">
      <svg class="h-3.5 w-3.5" viewBox="0 0 14 14" fill="none" stroke="#555"><circle cx="6" cy="6" r="4" stroke-width="2"/><path d="m9 9 4 4" stroke-width="2.400"/></svg>
    </label>
    <span class="mt-1 ml-2 h-[17px] w-px bg-[#c4c4c2]"></span>
    <button aria-label="视图方式" class="mr-2 ml-[9px] flex h-6 items-center"><svg class="h-4 w-4" viewBox="0 0 16 16" fill="none" stroke="#3a8de0"><path d="M1.500 1.500h3l1.500 2v4H1.500zM1 9.500h6" stroke-width="1.200"/><path d="M8.500 5h7v11h-7z" fill="#c5e2fa" stroke="none"/><path d="M9.500 6.500h3l1.500 2v4H9.500zM9 14.500h6" stroke-width="1.200"/></svg><svg class="ml-1.5 h-[3px] w-[5px]"><use href="#tri"/></svg></button>
  </div>
  <div class="flex">
    <div class="flex w-[21px] flex-col items-start" id="libs">
      <button aria-label="符号组" class="flex h-5 w-[21px] items-center justify-center bg-[#9fd6ee] pr-px text-[#1673c8]"><svg class="h-3.5 w-4"><use href="#folder"/></svg></button>
    </div>
    <ul id="groups" class="mt-[2px] ml-1.5 h-[484px] w-[174px] border border-[#7f8590] bg-[#fffffd] leading-4"></ul>
    <div class="mt-[2px] ml-[7px] flex h-[484px] w-[413px] border border-[#7f8590] bg-[#fffffd] py-px pr-0.5">
      <ul id="symbols" class="grid min-w-0 flex-1 auto-rows-[91px] grid-cols-[repeat(4,91px)] overflow-hidden pt-0.5"></ul>
      <div class="flex w-[15px] flex-col items-center bg-[#f0f0ec]"><svg class="my-[5px] h-2 w-2.5"><use href="#up"/></svg><span class="h-[46px] w-full bg-[#cbcbc9]"></span><svg class="mt-auto mb-1 h-2 w-2.5"><use href="#down"/></svg></div>
    </div>
    <div class="ml-[9px] flex w-[208px] flex-col pt-[3px]">
      <fieldset class="h-[190px] border border-[#dcdcda] px-0.5">
        <legend class="ml-1 px-0.5 leading-4">预览</legend>
        <div class="mt-1 flex h-[168px] items-center justify-center border border-[#646462] bg-[#fffffd]"><span class="h-[5px] w-[5px] rounded-full bg-[#46707f]"></span></div>
      </fieldset>
      <fieldset class="mt-[5px] h-[65px] w-[205px] border border-[#dcdcda] pt-px pl-3">
        <legend class="-ml-2 px-0.5 leading-4">显示大小</legend>
        <div class="flex h-6 items-center"><label for="dw" class="w-[75px]">显示宽度:</label><input id="dw" value="2.4" class="h-[17px] w-[67px] border border-[#a9afb3] bg-linear-to-b from-[#ecece8] to-[#fafaf8] pl-px text-[11px]"><button aria-label="调整显示宽度" class="-ml-px flex h-[17px] w-[15px] items-center justify-center border border-[#a9afb3] bg-[#f7f7f5]"><svg class="h-[7px] w-1" viewBox="0 0 4 7"><path d="M0 0l4 3.500L0 7z"/></svg></button><span class="ml-1.5 text-[11px]">mm</span></div>
        <div class="flex h-6 items-center"><label for="dh" class="w-[75px]">显示高度:</label><input id="dh" value="2.4" class="h-[17px] w-[67px] border border-[#a9afb3] bg-linear-to-b from-[#ecece8] to-[#fafaf8] pl-px text-[11px]"><button aria-label="调整显示高度" class="-ml-px flex h-[17px] w-[15px] items-center justify-center border border-[#a9afb3] bg-[#f7f7f5]"><svg class="h-[7px] w-1" viewBox="0 0 4 7"><path d="M0 0l4 3.500L0 7z"/></svg></button><span class="ml-1.5 text-[11px]">mm</span></div>
      </fieldset>
      <fieldset class="mt-[3px] h-[65px] w-[205px] border border-[#dcdcda] pl-3">
        <legend class="-ml-2 px-0.5 leading-4">符号大小</legend>
        <div class="flex h-6 items-center"><label for="sw" class="w-[75px]">符号宽度:</label><input id="sw" value="2.4" class="h-[17px] w-[67px] border border-[#a9afb3] bg-linear-to-b from-[#ecece8] to-[#fafaf8] pl-px text-[11px]"><button aria-label="调整符号宽度" class="-ml-px flex h-[17px] w-[15px] items-center justify-center border border-[#a9afb3] bg-[#f7f7f5]"><svg class="h-[7px] w-1" viewBox="0 0 4 7"><path d="M0 0l4 3.500L0 7z"/></svg></button><span class="ml-1.5 text-[11px]">mm</span></div>
        <div class="flex h-6 items-center"><label for="sh" class="w-[75px]">符号高度:</label><input id="sh" value="2.4" class="h-[17px] w-[67px] border border-[#a9afb3] bg-linear-to-b from-[#ecece8] to-[#fafaf8] pl-px text-[11px]"><button aria-label="调整符号高度" class="-ml-px flex h-[17px] w-[15px] items-center justify-center border border-[#a9afb3] bg-[#f7f7f5]"><svg class="h-[7px] w-1" viewBox="0 0 4 7"><path d="M0 0l4 3.500L0 7z"/></svg></button><span class="ml-1.5 text-[11px]">mm</span></div>
      </fieldset>
      <div class="pt-0.5 pl-[13px]">
        <div class="relative flex h-6 items-center text-[#a3a3a1]"><input id="lock" type="checkbox" checked disabled class="-ml-px h-[13px] w-[13px] appearance-none border border-[#c4c4c2] bg-[#f8f8f6]"><svg class="pointer-events-none absolute left-px h-[9px] w-[9px]" viewBox="0 0 9 9"><path d="m1 4.500 2.500 3 5-6.500" fill="none" stroke="#b5b5b3" stroke-width="1.500"/></svg><label for="lock" class="ml-1.5">锁定宽高比例</label></div>
        <div class="flex h-6 items-center"><label for="color" class="w-[75px]">符号颜色:</label><button id="color" class="flex h-[18px] w-[81px] items-center justify-center border border-[#adadab] bg-[#e2e2e0]"><span class="h-2 w-[71px] bg-[#46707f]"></span></button></div>
        <div class="flex h-6 items-center"><label for="rot" class="w-[75px]">旋转角度:</label><input id="rot" value="0" disabled class="h-[18px] w-[67px] border border-[#bcc2c5] bg-[#e8e8e6] pl-px text-[11px] text-[#a9a79a]"><button disabled aria-label="调整旋转角度" class="-ml-px flex h-[18px] w-[15px] items-center justify-center border border-[#bcc2c5] bg-[#e8e8e6]"><svg class="h-[7px] w-1" viewBox="0 0 4 7"><path d="M0 0l4 3.500L0 7z" fill="#a9a79a"/></svg></button><span class="ml-[5px]">度</span></div>
        <div class="flex h-[26px] items-center"><label for="alpha" class="w-[75px]">透明度:</label><input id="alpha" value="0" disabled class="h-[18px] w-[67px] border border-[#bcc2c5] bg-[#e8e8e6] pl-px text-[11px] text-[#a9a79a]"><button disabled aria-label="调整透明度" class="-ml-px flex h-[18px] w-[15px] items-center justify-center border border-[#bcc2c5] bg-[#e8e8e6]"><svg class="h-[7px] w-1" viewBox="0 0 4 7"><path d="M0 0l4 3.500L0 7z" fill="#a9a79a"/></svg></button><span class="ml-[5px] text-[11px]">%</span></div>
      </div>
    </div>
  </div>
  <div class="flex h-[47px] items-center justify-end gap-2 pt-1 pr-[21px]">
    <button class="h-[23px] w-[73px] border-2 border-[#0078e6] bg-[#ecece8] leading-4">确定</button>
    <button class="h-[23px] w-[73px] border border-[#adadab] bg-[#ecece8] leading-4">取消</button>
    <button class="h-[23px] w-[73px] border border-[#adadab] bg-[#e2e2e0] leading-4">应用</button>
  </div>
</div>

<script>
const byId = id => document.getElementById(id);

/* Workspace tree */
const rails = '<path d="M30.500 0v16M49.500 0v16" stroke="#666" stroke-dasharray="1 1"/>';
const datasets = ['NationAssistB_P', 'NationAssistA_P', 'Sea_P', 'RiverAssist_P', 'Capital_P', 'CityA_P', 'CityB_P', 'ProvinceCapital_P', 'Island_P', 'County_P', 'Airport_P', 'Town_P', 'New_Point', 'Coastline_L', 'GangAo_L', 'Province_L', 'Railway_L', 'StateRoad_L', 'ProvinceRoad_L', 'CountyRoad_L'];
byId('workspace').innerHTML =
  `<li class="flex h-4"><svg class="h-4 w-[81px] shrink-0" viewBox="0 0 81 16" fill="none">${rails}<path d="M54 8.500h7" stroke="#666" stroke-dasharray="1 1"/><rect x="45.500" y="4.500" width="8" height="8" fill="#f5f5f5" stroke="#8a8a8a"/><path d="M47 8.500h5" stroke="#3b4f9a"/><path d="M61.500 13V4M71.500 4v3" stroke="#2f76bd"/><ellipse cx="66.500" cy="3.500" rx="5" ry="2" stroke="#2f76bd"/><text x="63" y="15" font-size="7" fill="#1a9ad8" stroke="#1a9ad8" stroke-width=".4" font-family="Liberation Sans">UDB</text></svg>China</li>` +
  datasets.map(name => {
    const mark = name.endsWith('_L')
      ? '<path d="M79 10.500l4-3.500 1.500 2 2 1.500 2-2 6.500-6" stroke="#2f5fc0"/>'
      : '<circle cx="87" cy="8" r="3" fill="#2465d6"/>';
    const label = name === 'ProvinceCapital_P' ? '<span class="bg-[#efefeb] px-0.5 font-semibold text-black">' + name + '</span>' : '<span class="px-0.5">' + name + '</span>';
    return `<li class="flex h-4"><svg class="h-4 w-[98px] shrink-0" viewBox="0 0 98 16" fill="none">${rails}<path d="M68.500 0v16" stroke="#666" stroke-dasharray="1 1"/><path d="M70 8.500h9" stroke="#666" stroke-dasharray="1 1"/>${mark}</svg>${label}</li>`;
  }).join('');

/* Layer list */
const marks = [
  '<circle cx="103" cy="8" r="3.500" fill="#46707f"/>',
  '<path d="M95 1l15 14" stroke="#5d7350"/>',
  '<path d="M95.500 14.500v-9l7-4 6.500 4v9z" fill="#dbd8c1" stroke="#6b4458"/>'
];
byId('layers').innerHTML = ['ProvinceCapital_P@China', 'MainRiver_L@China', 'Province_R@China'].map((name, i) =>
  `<li class="flex h-4"><svg class="h-4 w-[114px] shrink-0" viewBox="0 0 114 16" fill="none">
    <path d="M24 8c3.500-6 11-6 14.500 0-3.500 6-11 6-14.500 0z" fill="#fff" stroke="#1583e0" stroke-width="1.800"/><circle cx="31" cy="8" r="2.800" fill="#1583e0"/>
    <circle cx="46" cy="4.500" r="3" fill="#1583e0"/><path d="M46 2l8 8.500-4 .5 2 3.500-2.500 1-2-4-3 2.500z" fill="#1583e0"/>
    <path d="M59.500 12 67 3l3 2-7 8.500-4 .8z" stroke="#b7bcc6"/><rect x="67" y="9" width="7" height="5.500" fill="#b7bcc6"/><path d="M68.500 9V7.500a2 2 0 0 1 4 0V9" stroke="#b7bcc6"/>
    <path d="M77 8h17M85.500 0v16" stroke="#3b5c80" stroke-width="1.300"/><rect x="82" y="4.500" width="7" height="7" fill="#fff" stroke="#1572c8" stroke-width="1.800"/><circle cx="85.500" cy="8" r="1.200" fill="#1572c8"/>${marks[i]}</svg>` +
    (i === 0 ? `<span class="bg-[#cbcbc9] text-black">${name}</span>` : `<span>${name}</span>`) + '</li>').join('');

/* Linked symbol libraries */
byId('libs').insertAdjacentHTML('beforeend',
  [['基础符号', '#ffb429', 'mt-[5px]'], ['自动制图符号', '#4d7dff', 'mt-[11px]'], ['三维符号', '#e858e8', 'mt-[11px]']].map(([t, c, m]) =>
  `<button class="flex flex-col items-center gap-[3px] ${m} pl-0.5 text-[12px] leading-4"><svg class="h-4 w-4" viewBox="0 0 16 16"><path d="M1 1h11v9l-4 3H1z" fill="${c}"/><path d="M1 1h5v5H1z" fill="#fff" opacity=".45"/><path d="M7 3v6l4-3" fill="#5a4a20" opacity=".5"/><ellipse cx="6.500" cy="12" rx="3.500" ry="2.300" fill="none" stroke="#777" stroke-width="1.500"/><ellipse cx="11.500" cy="12" rx="3.500" ry="2.300" fill="none" stroke="#555" stroke-width="1.500"/></svg><span class="[text-orientation:sideways] [writing-mode:vertical-rl]">${t}</span></button>`).join('') +
  '<button aria-label="添加库" class="mt-3 pl-[3px]"><svg class="block h-3.5 w-3.5" viewBox="0 0 14 14"><path d="M5 .5h4V5h4.500v4H9v4.500H5V9H.5V5H5z" fill="#1fc95a" stroke="#0f8f3a"/></svg></button>');

/* Group tree */
const box = (x, plus) => `<rect x="${x - 4}" y="4.500" width="8" height="8" fill="#f8f8f8" stroke="#8a8a8a"/><path d="M${x - 2.5} 8.500h5${plus ? 'M' + x + ' 6v5' : ''}" stroke="#3b4f9a"/>`;
byId('groups').innerHTML =
  `<li class="flex h-4 items-center"><svg class="h-4 w-[23px] shrink-0" viewBox="0 0 23 16" fill="none"><path d="M17 8.500h6" stroke="#666" stroke-dasharray="1 1"/>${box(12.5)}</svg><svg class="h-3.5 w-4 text-[#2a62d8]"><use href="#folder"/></svg><span class="ml-1 bg-[#f0f0ec] px-px">根组</span></li>` +
  ['城市', '云地图符号', '天气', '基础符号'].map((t, i) =>
  `<li class="flex h-4 items-center"><svg class="h-4 w-[42px] shrink-0" viewBox="0 0 42 16" fill="none"><path d="M31.500 0v${i === 3 ? 8 : 16}" stroke="#666" stroke-dasharray="1 1"/><path d="M32 8.500h10" stroke="#666" stroke-dasharray="1 1"/>${i === 1 ? box(31.5, true) : ''}</svg><svg class="h-3.5 w-4 text-[#2a62d8]"><use href="#folder"/></svg><span class="ml-1 px-px">${t}</span></li>`).join('');

/* Symbols */
const dot = (x, y, r = 1) => `<circle cx="${x}" cy="${y}" r="${r}" fill="#00509f" stroke="none"/>`;
const symbols = [
  ['System 0', '<path d="M22 22h4v4h-4z" fill="#00509f" stroke="none"/>'],
  ['System 1', '<defs><pattern id="sel" width="2" height="2" patternUnits="userSpaceOnUse"><path d="M0 0h1v1H0z" fill="#1a78d0" stroke="none"/></pattern></defs><path d="M0 0h48v48H0z" fill="url(#sel)" stroke="none"/>' + dot(24.5, 24.5, 2)],
  ['干出礁', '<path d="M13 24.500h23"/><path d="M27 13.500v23.500" stroke-width="2" opacity=".5"/>'],
  ['暗礁', '<path d="M24.500 16v17"/><path d="M12.500 16h23.500" stroke-width="2" opacity=".5"/>'],
  ['危险海区', '<path d="M24.500 15v19"/><path d="M13 34h23" stroke-width="2" opacity=".5"/>' + [[24.5,13.5],[15.5,16],[32.5,16],[10.5,23.5],[38,23.5],[10.5,31.5],[38.5,31.5],[12.5,36.5],[36,35.5],[19.5,41.5],[29.5,41.5]].map(p => dot(p[0], p[1], 1.4)).join('')],
  ['危险岸区', '<path d="M13 33.500l20.500-20.500M23.500 23.500l12 12"/>'],
  ['泄洪洞、出水口', '<path d="M13 20.500h23v7.500H13z" fill="#00509f" stroke="none"/>'],
  ['涵洞', '<path d="M18.500 13l6 5.500 6-5.500M24.500 18.500v5M24.500 26.500v4M18.500 36l6-5.500 6 5.500"/>'],
  ['坎儿井', '<path d="M12.500 18.500H36M33.500 16v19"/><path d="M12.500 29H36M16 16v19" stroke-width="2" opacity=".5"/>'],
  ['地下河段出入口', dot(24.5, 24.5, 9.3)],
  ['独立天文点', '<path d="M24.500 13.500l2.600 8H36l-7 5 2.600 8.500-7.100-5.300L17.400 35l2.600-8.500-7-5h8.900z"/>' + dot(24.5, 25)],
  ['重力点', '<circle cx="24.500" cy="24.500" r="11.500"/><path d="M24.500 17.500l7 11.500h-14z"/>'],
  ['卫星定位等级点', '<path d="M24.500 12l9 22h-18z"/><circle cx="24.500" cy="28" r="5.700"/>' + dot(24.5, 28, 1.2)],
  ['卫星定位连续运行站点', '<path d="M24.500 12l9 22h-18z" fill="#00509f"/><circle cx="24.500" cy="28" r="5" fill="#fff" stroke="none"/>' + dot(24.5, 28, 1.2)],
  ['水准点', '<circle cx="24.500" cy="24.500" r="11.500"/><path d="M16.500 16.500l16 16M32.500 16.500l-16 16"/>'],
  ['水准原点', '<path d="M13.500 13.500h22v22h-22z" stroke-width="1.300"/><circle cx="24.500" cy="24.500" r="8"/>'],
  ['图根点', '<path d="M12.500 12.500h23v23h-23z" stroke="#0070d0"/>' + dot(24.5, 24.5, 1.2)],
  ['大地原点', '<circle cx="24.500" cy="24.500" r="11.500"/><path d="M24.500 13v23M13 24.500h23"/>'],
  ['喷水池', '<path d="M14.500 17c0-7 9-7 9 0 0-7 9-7 9 0M14.500 20v5M32.500 20v5M23.500 14v19M19.500 25c0-6 8-6 8 0M19.500 27v6M27.500 27v6"/><circle cx="23.500" cy="37" r="3.500"/>'],
  ['废弃的平峒洞口', '<path d="M14 30h3.500V18.500h15V30H35" stroke-width="1.300" opacity=".75"/><path d="M19.500 20l10 7M29.500 20l-10 7M20.500 25v3h3M28.500 25v3h-3"/>'],
  ['', '<path d="M14 30h2.500V18.500h16V30" stroke-width="1.300" opacity=".75"/><path d="M20 26v-3l3-2M29 26v-3l-3-2"/>'],
  ['', '<path d="M22 13v20M27 13v20" opacity=".75"/>'],
  ['', '<path d="M20 26c-3-14 12-14 9 0M24.500 17v12" stroke="#00a070"/>'],
  ['', '<path d="M18.500 15v12M15 19l3.500-3.500 3.500 3.500M14.500 23l4-3.500 4 3.500M30 15v12M26.500 19l3.500-3.500 3.500 3.500M26 23l4-3.500 4 3.500" stroke="#00a070" stroke-width="1.400"/>']
];
byId('symbols').innerHTML = symbols.map(([name, art]) =>
  `<li class="flex flex-col items-center"><svg class="h-12 w-12 shrink-0" viewBox="0 0 48 48" fill="none" stroke="#00509f">${art}</svg>` +
  (name.startsWith('System')
    ? `<span class="mt-0.5 px-0.5 text-[11px] leading-[15px] ${name === 'System 1' ? 'bg-[#efefeb]' : ''}">${name}</span>`
    : `<span class="mt-0.5 w-[84px] text-center leading-[13px] break-all">${name}</span>`) + '</li>').join('');
</script>
</body>
</html>
